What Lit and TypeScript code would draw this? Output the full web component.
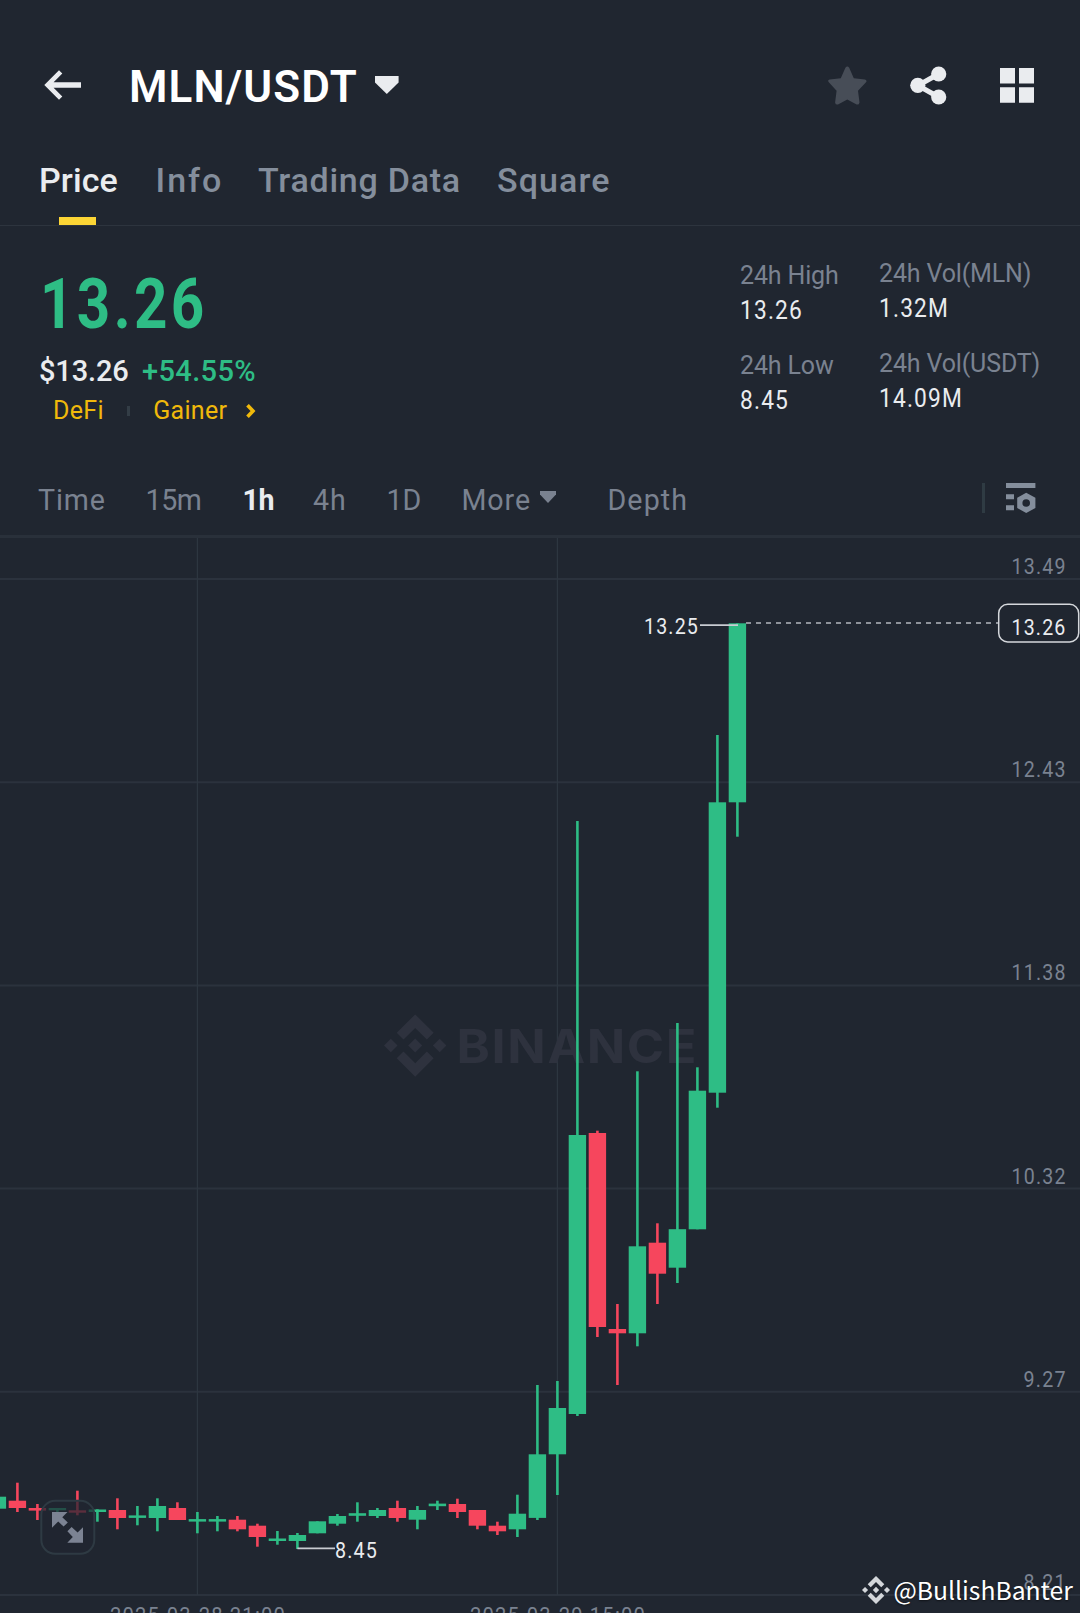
import { LitElement, html, svg, css } from "lit";
import { customElement, state } from "lit/decorators.js";
import { classMap } from "lit/directives/class-map.js";

type Candle = [high: number, bodyTop: number, bodyBottom: number, low: number, up: 0 | 1];

const FIRST_CENTER = -2.6;
const STEP = 20;
const BODY = 17.4;

// Vertical extents in chart units, oldest candle first.
const candles: Candle[] = [
  [1496.7, 1496.7, 1508.7, 1508.7, 1],
  [1482.7, 1500.7, 1508, 1512, 0],
  [1504, 1508, 1510.6, 1520, 0],
  [1508, 1508, 1510.3, 1512, 1],
  [1490.7, 1510.3, 1512.7, 1515.3, 0],
  [1509.3, 1509.5, 1512, 1521.7, 1],
  [1498.3, 1510, 1518, 1529.3, 0],
  [1506, 1515.4, 1517.9, 1525.3, 1],
  [1498.3, 1506, 1518, 1531.3, 1],
  [1502.3, 1508, 1520, 1520, 0],
  [1512, 1519.1, 1521.6, 1533.3, 1],
  [1516, 1519.1, 1521.6, 1531.3, 1],
  [1516, 1519.7, 1529.3, 1531.3, 0],
  [1523.7, 1525.7, 1537, 1546.7, 0],
  [1531, 1538.5, 1541, 1544.7, 1],
  [1533, 1535, 1541, 1549, 1],
  [1521.3, 1521.3, 1533.3, 1533.3, 1],
  [1514, 1516, 1523.7, 1525.7, 1],
  [1502.3, 1513.2, 1515.8, 1521.7, 1],
  [1508, 1510, 1516, 1518, 1],
  [1500.7, 1508, 1518, 1521.7, 0],
  [1506, 1510, 1519.7, 1529.3, 1],
  [1500.7, 1503.6, 1506.2, 1510, 1],
  [1498.7, 1504, 1512, 1518, 0],
  [1510, 1510, 1525.7, 1529.3, 0],
  [1521.7, 1525.7, 1531.3, 1535, 0],
  [1494.7, 1513.7, 1529.3, 1537, 1],
  [1385, 1454.3, 1517.9, 1520, 1],
  [1381, 1408, 1454.3, 1495, 1],
  [821, 1135, 1414, 1416, 1],
  [1130.7, 1133, 1327, 1337, 0],
  [1304, 1329, 1333.3, 1385, 0],
  [1071.3, 1246.3, 1333.3, 1346.3, 1],
  [1223.3, 1242.7, 1273.7, 1304, 0],
  [1023, 1229.2, 1267.7, 1283, 1],
  [1067.3, 1090.7, 1229.3, 1229.3, 1],
  [735, 802.3, 1092.7, 1107.7, 1],
  [623.3, 623.3, 802.3, 836.7, 1],
];

const levels = [
  { y: 579, label: "13.49" },
  { y: 782.2, label: "12.43" },
  { y: 985.4, label: "11.38" },
  { y: 1188.6, label: "10.32" },
  { y: 1391.8, label: "9.27" },
  { y: 1595, label: "8.21" },
];

const logo = svg`
  <path d="M12 0 19.1 7.1 16.5 9.7 12 5.2 7.5 9.7 4.9 7.1Z"/>
  <path d="M12 24 19.1 16.9 16.5 14.3 12 18.8 7.5 14.3 4.9 16.9Z"/>
  <path d="M12 9.3 14.7 12 12 14.7 9.3 12Z"/>
  <path d="M2.6 9.4 5.2 12 2.6 14.6 0 12Z"/>
  <path d="M21.4 9.4 24 12 21.4 14.6 18.8 12Z"/>`;

@customElement("price-chart")
export class PriceChart extends LitElement {
  static styles = css`
    :host { display: block; }
    .chart { display: block; width: 1080px; height: 1075px; font-family: Roboto, "Liberation Sans", sans-serif; }
    .grid { stroke: #2b323d; stroke-width: 2; }
    .grid.v { stroke: #2d3640; stroke-width: 1.2; }
    .up { fill: #2ebd85; }
    .down { fill: #f6465d; }
    .axis { fill: #7a8290; font-size: 22px; letter-spacing: 1.3px; }
    .mark { fill: #eaecef; font-size: 22px; letter-spacing: 1.3px; }
    .lead { stroke: #c9ccd2; stroke-width: 1.8; }
    .dash { stroke: #b4b8be; stroke-width: 1.6; stroke-dasharray: 5 5; }
    .tag { fill: #202630; stroke: #d5d8dc; stroke-width: 1.5; }
    .watermark { fill: #2e323e; }
    .brand { font-family: Inter, sans-serif; font-weight: 700; font-size: 47px; letter-spacing: 1.5px; }
    .expand { fill: #202630; fill-opacity: 0.72; stroke: #2e3a43; stroke-width: 2; }
    .arrows { fill: #7c8393; }
  `;

  private candle([high, top, bottom, low, up]: Candle, i: number) {
    const x = FIRST_CENTER + i * STEP;
    return svg`<g class=${up ? "up" : "down"}>
      <rect x=${x - 1.3} y=${high} width="2.6" height=${low - high}></rect>
      <rect x=${x - BODY / 2} y=${top} width=${BODY} height=${bottom - top}></rect>
    </g>`;
  }

  render() {
    return html`<svg class="chart" viewBox="0 538 1080 1075">
      ${levels.map((l) => svg`<line class="grid" x1="0" x2="1080" y1=${l.y} y2=${l.y}></line>`)}
      <line class="grid v" x1="197.4" x2="197.4" y1="538" y2="1595"></line>
      <line class="grid v" x1="557.4" x2="557.4" y1="538" y2="1595"></line>
      <g class="watermark">
        <g transform="translate(384 1014.4) scale(2.6)">${logo}</g>
        <text class="brand" x="456.5" y="1063" textLength="241.5" lengthAdjust="spacingAndGlyphs">BINANCE</text>
      </g>
      ${candles.map((c, i) => this.candle(c, i))}
      <line class="dash" x1="746" x2="998" y1="623" y2="623"></line>
      <line class="lead" x1="700" x2="738" y1="625.2" y2="625.2"></line>
      <text class="mark" x="644" y="633.9" textLength="55" lengthAdjust="spacingAndGlyphs">13.25</text>
      <line class="lead" x1="297.4" x2="335" y1="1548.4" y2="1548.4"></line>
      <text class="mark" x="335" y="1557.7" textLength="43" lengthAdjust="spacingAndGlyphs">8.45</text>
      ${levels.map((l) => {
        const w = l.label.length > 4 ? 55 : 43;
        return svg`<text class="axis" x=${1066.6 - w} y=${l.y - 5} textLength=${w} lengthAdjust="spacingAndGlyphs">${l.label}</text>`;
      })}
      <rect class="tag" x="998.7" y="604.3" width="80" height="37.6" rx="9"></rect>
      <text class="mark" x="1011.5" y="634.7" textLength="55" lengthAdjust="spacingAndGlyphs">13.26</text>
      <text class="axis" x="110" y="1623" textLength="176" lengthAdjust="spacingAndGlyphs">2025-03-28 21:00</text>
      <text class="axis" x="470" y="1623" textLength="176" lengthAdjust="spacingAndGlyphs">2025-03-29 15:00</text>
      <rect class="expand" x="41.3" y="1500.8" width="53" height="53" rx="14"></rect>
      <g class="arrows">
        <path d="M52 1512H67.5L62.3 1517.2 67.8 1522.4 63.6 1526.6 58.2 1521.4 52 1527.8Z"/>
        <path d="M83 1542.7V1527.2L77.6 1532.4 71.6 1527 67.4 1531.2 72.8 1537 67.3 1542.7Z"/>
      </g>
    </svg>`;
  }
}

@customElement("app-root")
export class AppRoot extends LitElement {
  @state() private tab = "Price";
  @state() private interval = "1h";

  static styles = css`
    :host {
      display: block; position: relative; width: 1080px; height: 1613px; overflow: hidden;
      background: #202630; color: #eaecef; font-family: Roboto, "Liberation Sans", sans-serif;
    }
    svg { display: block; }
    .header { box-sizing: border-box; height: 129px; padding: 41px 46px 0 44px; display: flex; align-items: center; fill: #eaecef; }
    .pair { margin: 3px 0 0 47px; color: #fff; font-size: 44px; line-height: 52px; font-weight: 600; letter-spacing: 1.05px; width: 245.5px; white-space: nowrap; }
    .actions { margin-left: auto; display: flex; align-items: center; }
    .star { fill: #474d57; margin-right: 43px; }
    .share { margin-right: 53px; }
    .tabs { display: grid; grid-template-columns: 116.5px 102.5px 239px auto; padding: 31px 0 0 39px; height: 65px; border-bottom: 1px solid #2d343e; }
    .tab { font-size: 34px; line-height: 40px; font-weight: 500; color: #848e9c; cursor: pointer; white-space: nowrap; letter-spacing: 0.75px; }
    .tab:nth-child(2) { letter-spacing: 2px; }
    .tab:nth-child(4) { letter-spacing: 1.1px; }
    .tab.active { color: #eaecef; letter-spacing: 0.1px; }
    .tab.active::after { content: ""; display: block; width: 37px; height: 8px; margin: 17px 0 0 20px; background: #fcd535; }
    .summary { display: flex; height: 236px; }
    .quote { width: 701px; padding: 39px 0 0 39px; }
    .last { margin-left: 1px; color: #2ebd85; font-size: 69.5px; line-height: 80px; font-weight: 700; letter-spacing: 4px; transform: scaleX(0.84); transform-origin: left; }
    .fiat { margin-top: 8px; display: flex; gap: 13.5px; font-size: 29px; line-height: 36px; font-weight: 500; letter-spacing: -0.15px; }
    .gain { color: #2ebd85; letter-spacing: 0.35px; }
    .tags { margin-top: 7px; display: flex; align-items: center; padding-left: 14px; font-size: 25px; line-height: 30px; letter-spacing: 0.3px; color: #f0b90b; }
    .split { width: 3px; height: 10px; margin: 0 23.5px 0 23px; background: #333d46; }
    .chev { margin-left: 19px; fill: none; stroke: #f0b90b; stroke-width: 3.6; }
    .stats { display: grid; grid-template-columns: 139px auto; align-items: start; font-size: 25px; line-height: 35px; white-space: nowrap; }
    .col { display: grid; row-gap: 20px; padding-top: 32px; }
    .col.wide { padding-top: 30px; }
    .key { color: #7a8290; letter-spacing: -0.15px; }
    .value { letter-spacing: 1.3px; transform: scaleX(0.91); transform-origin: left; }
    .intervals { box-sizing: border-box; height: 76px; padding: 2px 44px 0 38px; border-bottom: 3px solid #29303a; display: flex; align-items: center; }
    .set { display: grid; grid-template-columns: 107.5px 97px 70.5px 73.5px 75px 146px auto; }
    .item { display: flex; align-items: center; font-size: 28.6px; line-height: 36px; letter-spacing: 0.9px; color: #7a8290; cursor: pointer; }
    .item:nth-child(2) { letter-spacing: -0.4px; }
    .item:nth-child(5) { letter-spacing: 0; }
    .item:nth-child(7) { letter-spacing: 1.1px; }
    .item.active { color: #eaecef; font-weight: 700; letter-spacing: -0.5px; }
    .drop { fill: #7a8290; margin: -5px 0 0 9.5px; }
    .tools { margin: -3px 0 0 auto; display: flex; gap: 21.5px; fill: #848e9c; }
    .rule { width: 3px; height: 30px; background: #2f3b43; }
    .credit { position: absolute; left: 862px; top: 1572.5px; display: flex; align-items: center; gap: 3.5px; color: #fff; fill: #d3d6da; font-family: "Noto Sans CJK SC", sans-serif; font-size: 24.7px; line-height: 36px; white-space: nowrap; text-shadow: 0 1px 2px #0008; }
    .handle { margin-top: -2px; }
  `;

  private stat(key: string, value: string) {
    return html`<div><div class="key">${key}</div><div class="value">${value}</div></div>`;
  }

  render() {
    return html`
      <header class="header">
        <svg width="38" height="30" viewBox="0 0 38 30">
          <path d="M15 0.2 18.3 3.6 9.6 12.3H37V17.7H9.6L18.3 26.4 15 29.8 0.3 15Z"/>
        </svg>
        <div class="pair">MLN/USDT</div>
        <svg width="24" height="18" viewBox="0 0 24 18"><path d="M0 0H23.6V6.5L11.8 18 0 6.5Z"/></svg>
        <div class="actions">
          <svg class="star" width="39" height="39" viewBox="0 0 39 39">
            <path d="M17.4 1.7Q19.3-.9 21.2 1.7L25.8 12.3 37 13.4Q39.4 14.2 38 16.3L30 24.7 31.5 36.4Q31.2 39 28.6 38.5L19.3 33.5 10 38.5Q7.4 39 7.1 36.4L8.6 24.7 .8 16.3Q-.8 14.2 1.6 13.4L12.8 12.3Z"/>
          </svg>
          <svg class="share" width="37" height="39" viewBox="0 0 37 39">
            <path d="M8 19.5 28.5 8M8 19.5 28.5 31" stroke="#eaecef" stroke-width="5"/>
            <circle cx="7.8" cy="19.3" r="7.6"/><circle cx="28.7" cy="8" r="7.6"/><circle cx="28.7" cy="31" r="7.6"/>
          </svg>
          <svg width="34" height="35" viewBox="0 0 34 35">
            <path d="M0 0H15V15.6H0ZM19 0H34V15.6H19ZM0 19.2H15V34.8H0ZM19 19.2H34V34.8H19Z"/>
          </svg>
        </div>
      </header>
      <nav class="tabs">
        ${["Price", "Info", "Trading Data", "Square"].map(
          (t) => html`<div class=${classMap({ tab: true, active: t === this.tab })} @click=${() => (this.tab = t)}>${t}</div>`
        )}
      </nav>
      <section class="summary">
        <div class="quote">
          <div class="last">13.26</div>
          <div class="fiat"><span>$13.26</span><span class="gain">+54.55%</span></div>
          <div class="tags">
            <span>DeFi</span><span class="split"></span><span>Gainer</span>
            <svg class="chev" width="10" height="14" viewBox="0 0 10 14"><path d="M1.5 1.2 7 7 1.5 12.8"/></svg>
          </div>
        </div>
        <div class="stats">
          <div class="col">${this.stat("24h High", "13.26")}${this.stat("24h Low", "8.45")}</div>
          <div class="col wide">${this.stat("24h Vol(MLN)", "1.32M")}${this.stat("24h Vol(USDT)", "14.09M")}</div>
        </div>
      </section>
      <div class="intervals">
        <div class="set">
          ${["Time", "15m", "1h", "4h", "1D", "More", "Depth"].map(
            (t) => html`<div class=${classMap({ item: true, active: t === this.interval })} @click=${() => (this.interval = t)}>
              ${t}${t === "More"
                ? html`<svg class="drop" width="16" height="12" viewBox="0 0 16 12"><path d="M0 0H16V3.6L8 12 0 3.6Z"/></svg>`
                : ""}
            </div>`
          )}
        </div>
        <div class="tools">
          <span class="rule"></span>
          <svg width="30" height="30" viewBox="0 0 30 30">
            <path d="M0 0H29.4V5H0ZM0 11.3H8V16.2H0ZM0 22.3H8V27.3H0Z"/>
            <path fill-rule="evenodd" d="M20.2 9.8 29.4 14.8V25L20.2 30 11.2 25V14.8ZM20.2 16.2A3.8 3.8 0 1 0 20.2 23.8 3.8 3.8 0 1 0 20.2 16.2Z"/>
          </svg>
        </div>
      </div>
      <price-chart></price-chart>
      <div class="credit">
        <svg width="28" height="28" viewBox="0 0 24 24">${logo}</svg>
        <span class="handle">@BullishBanter</span>
      </div>
    `;
  }
}
